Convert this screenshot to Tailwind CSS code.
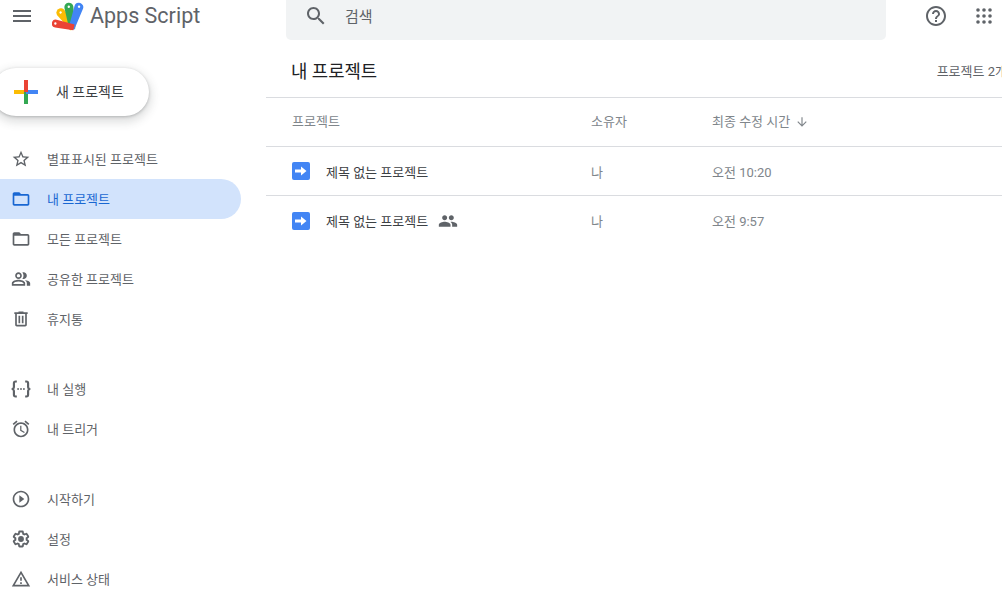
<!DOCTYPE html>
<html lang="ko">
<head>
    <meta charset="UTF-8" />
    <meta name="viewport" content="width=device-width, initial-scale=1" />
    <title>Apps Script</title>
    <script src="https://cdn.jsdelivr.net/npm/@tailwindcss/browser@4"></script>
</head>
<body class="bg-white font-['Roboto','Noto_Sans_CJK_KR',sans-serif] text-[#5f6368] overflow-hidden">
<div class="w-[1002px] h-[591px] overflow-hidden flex flex-col">

    <!-- Top bar -->
    <header class="flex h-[40px] shrink-0">
        <div class="w-[286px] flex items-start shrink-0">
            <svg class="w-6 h-6 ml-[10px] mt-[4px] fill-[#5f6368]" viewBox="0 0 24 24"><path d="M3 18h18v-2H3v2zm0-5h18v-2H3v2zm0-7v2h18V6H3z"/></svg>
            <svg class="w-[32px] h-[30px] ml-[18px] mt-[1px]" viewBox="0 0 32 30">
                <g transform="rotate(-38 20 26)"><path d="M15.500 8a4.500 4.500 0 0 1 9 0L23 28h-6z" fill="#fbbc04"/><circle cx="20" cy="7.500" r="1.200" fill="#fff"/></g>
                <g transform="rotate(-9 20 26)"><path d="M15.500 6a4.500 4.500 0 0 1 9 0L23 28h-6z" fill="#34a853"/><circle cx="20" cy="5.500" r="1.200" fill="#fff"/></g>
                <g transform="rotate(19 20 26)"><path d="M15.500 5a4.500 4.500 0 0 1 9 0L23 28h-6z" fill="#4285f4"/><circle cx="20" cy="4.500" r="1.200" fill="#fff"/></g>
                <g transform="rotate(-78 20 26)"><path d="M16 9.500a4 4 0 0 1 8 0L23 28h-6z" fill="#ea4335"/><circle cx="20" cy="9" r="1.200" fill="#fff"/></g>
            </svg>
            <span class="ml-[6px] mt-[1px] text-[21.5px] leading-[30px] text-[#5f6368]">Apps Script</span>
        </div>
        <div class="w-[600px] h-[40px] bg-[#f1f3f4] rounded-b-[5px] flex items-center shrink-0">
            <svg class="w-6 h-6 ml-[18px] mb-[8px] fill-[#5f6368]" viewBox="0 0 24 24"><path d="M15.500 14h-.79l-.28-.27C15.410 12.590 16 11.110 16 9.500 16 5.910 13.090 3 9.500 3S3 5.910 3 9.500 5.910 16 9.500 16c1.610 0 3.090-.59 4.230-1.570l.27.28v.79l5 4.990L20.490 19l-4.990-5zm-6 0C7.010 14 5 11.990 5 9.500S7.010 5 9.500 5 14 7.010 14 9.500 11.990 14 9.500 14z"/></svg>
            <span class="ml-[17px] mb-[5px] text-[15px] text-[#5f6368]">검색</span>
        </div>
        <div class="flex items-start shrink-0">
            <svg class="w-6 h-6 ml-[38px] mt-[4px] fill-[#5f6368]" viewBox="0 0 24 24"><path d="M11 18h2v-2h-2v2zm1-16C6.480 2 2 6.480 2 12s4.480 10 10 10 10-4.480 10-10S17.520 2 12 2zm0 18c-4.410 0-8-3.590-8-8s3.590-8 8-8 8 3.590 8 8-3.590 8-8 8zm0-14c-2.210 0-4 1.790-4 4h2c0-1.100.9-2 2-2s2 .9 2 2c0 2-3 1.750-3 5h2c0-2.250 3-2.500 3-5 0-2.210-1.790-4-4-4z"/></svg>
            <svg class="w-6 h-6 ml-[24px] mt-[4px] fill-[#5f6368]" viewBox="0 0 24 24">
                <circle cx="6" cy="6" r="1.800"/><circle cx="12" cy="6" r="1.800"/><circle cx="18" cy="6" r="1.800"/>
                <circle cx="6" cy="12" r="1.800"/><circle cx="12" cy="12" r="1.800"/><circle cx="18" cy="12" r="1.800"/>
                <circle cx="6" cy="18" r="1.800"/><circle cx="12" cy="18" r="1.800"/><circle cx="18" cy="18" r="1.800"/>
            </svg>
        </div>
    </header>

    <div class="flex flex-1 min-h-0">
        <!-- Sidebar -->
        <aside class="w-[266px] shrink-0 pt-[28px]">
            <button class="ml-[-8px] w-[157px] h-[48px] rounded-full bg-white shadow-[0_1px_3px_rgba(60,64,67,0.3),0_4px_8px_3px_rgba(60,64,67,0.15)] flex items-center">
                <svg class="w-6 h-6 ml-[22px]" viewBox="0 0 24 24">
                    <rect x="0" y="10" width="12" height="4" fill="#fbbc04"/>
                    <rect x="10" y="12" width="4" height="12" fill="#34a853"/>
                    <rect x="12" y="10" width="12" height="4" fill="#4285f4"/>
                    <rect x="10" y="0" width="4" height="12" fill="#ea4335"/>
                </svg>
                <span class="ml-[18px] pt-[1px] text-[14px] text-[#3c4043]">새 프로젝트</span>
            </button>

            <nav class="mt-[23px] text-[13px]">
                <a class="flex items-center h-10 w-[241px] pl-[11px]">
                    <svg class="w-5 h-5 fill-[#5f6368]" viewBox="0 0 24 24"><path d="M22 9.240l-7.190-.62L12 2 9.190 8.630 2 9.240l5.460 4.730L5.820 21 12 17.270 18.180 21l-1.630-7.030L22 9.240zM12 15.400l-3.760 2.270 1-4.280-3.320-2.880 4.380-.38L12 6.100l1.710 4.040 4.380.38-3.320 2.880 1 4.280L12 15.400z"/></svg>
                    <span class="ml-[16px] pt-[1px]">별표표시된 프로젝트</span>
                </a>
                <a class="flex items-center h-10 w-[241px] pl-[11px] bg-[#d2e3fc] rounded-r-full text-[#1967d2]">
                    <svg class="w-5 h-5 fill-[#1967d2]" viewBox="0 0 24 24"><path d="M20 6h-8l-2-2H4c-1.100 0-1.990.9-1.990 2L2 18c0 1.100.9 2 2 2h16c1.100 0 2-.9 2-2V8c0-1.100-.9-2-2-2zm0 12H4V8h16v10z"/></svg>
                    <span class="ml-[16px] pt-[1px]">내 프로젝트</span>
                </a>
                <a class="flex items-center h-10 w-[241px] pl-[11px]">
                    <svg class="w-5 h-5 fill-[#5f6368]" viewBox="0 0 24 24"><path d="M20 6h-8l-2-2H4c-1.100 0-1.990.9-1.990 2L2 18c0 1.100.9 2 2 2h16c1.100 0 2-.9 2-2V8c0-1.100-.9-2-2-2zm0 12H4V8h16v10z"/></svg>
                    <span class="ml-[16px] pt-[1px]">모든 프로젝트</span>
                </a>
                <a class="flex items-center h-10 w-[241px] pl-[11px]">
                    <svg class="w-5 h-5 fill-[#5f6368]" viewBox="0 0 24 24"><path d="M16.670 13.130C18.040 14.060 19 15.320 19 17v3h4v-3c0-2.180-3.570-3.470-6.330-3.870zM15 12c2.210 0 4-1.790 4-4s-1.790-4-4-4c-.47 0-.91.1-1.330.24C14.500 5.270 15 6.580 15 8s-.5 2.730-1.330 3.760c.42.14.86.24 1.330.24zM9 12c2.210 0 4-1.790 4-4s-1.790-4-4-4-4 1.790-4 4 1.790 4 4 4zm0-6c1.100 0 2 .9 2 2s-.9 2-2 2-2-.9-2-2 .9-2 2-2zM9 13c-2.670 0-8 1.340-8 4v3h16v-3c0-2.660-5.330-4-8-4zm6 5H3v-.99C3.200 16.290 6.300 15 9 15s5.800 1.290 6 2z"/></svg>
                    <span class="ml-[16px] pt-[1px]">공유한 프로젝트</span>
                </a>
                <a class="flex items-center h-10 w-[241px] pl-[11px]">
                    <svg class="w-5 h-5 fill-[#5f6368]" viewBox="0 0 24 24"><path d="M15 4V3H9v1H4v2h1v13c0 1.100.9 2 2 2h10c1.100 0 2-.9 2-2V6h1V4h-5zm2 15H7V6h10v13zM9 8h2v9H9zm4 0h2v9h-2z"/></svg>
                    <span class="ml-[16px] pt-[1px]">휴지통</span>
                </a>

                <a class="flex items-center h-10 w-[241px] pl-[11px] mt-[30px]">
                    <svg class="w-5 h-5 fill-none stroke-[#5f6368] stroke-[2.600]" viewBox="0 0 24 24">
                        <path d="M7 3H5.500C4 3 3.500 4 3.500 5v4.500c0 1.500-1 2-1.500 2.500.5.5 1.500 1 1.500 2.500V19c0 1 .5 2 2 2H7M17 3h1.500c1.500 0 2 1 2 2v4.500c0 1.500 1 2 1.500 2.500-.5.5-1.500 1-1.500 2.500V19c0 1-.5 2-2 2H17"/>
                        <circle class="fill-[#5f6368] stroke-0" cx="8.500" cy="12" r="1.100"/><circle class="fill-[#5f6368] stroke-0" cx="12" cy="12" r="1.100"/><circle class="fill-[#5f6368] stroke-0" cx="15.500" cy="12" r="1.100"/>
                    </svg>
                    <span class="ml-[16px] pt-[1px]">내 실행</span>
                </a>
                <a class="flex items-center h-10 w-[241px] pl-[11px]">
                    <svg class="w-5 h-5 fill-[#5f6368]" viewBox="0 0 24 24"><path d="M22 5.720l-4.600-3.860-1.290 1.530 4.600 3.860L22 5.720zM7.880 3.390L6.600 1.860 2 5.710l1.290 1.530 4.590-3.850zM12.500 8H11v6l4.750 2.850.75-1.230-4-2.370V8zM12 4c-4.970 0-9 4.030-9 9s4.030 9 9 9 9-4.030 9-9-4.030-9-9-9zm0 16c-3.870 0-7-3.130-7-7s3.130-7 7-7 7 3.130 7 7-3.130 7-7 7z"/></svg>
                    <span class="ml-[16px] pt-[1px]">내 트리거</span>
                </a>

                <a class="flex items-center h-10 w-[241px] pl-[11px] mt-[30px]">
                    <svg class="w-5 h-5 fill-[#5f6368]" viewBox="0 0 24 24"><path d="M10 16.500l6-4.500-6-4.500v9zM12 2C6.480 2 2 6.480 2 12s4.480 10 10 10 10-4.480 10-10S17.520 2 12 2zm0 18c-4.410 0-8-3.590-8-8s3.590-8 8-8 8 3.590 8 8-3.590 8-8 8z"/></svg>
                    <span class="ml-[16px] pt-[1px]">시작하기</span>
                </a>
                <a class="flex items-center h-10 w-[241px] pl-[11px]">
                    <svg class="w-5 h-5" viewBox="0 0 24 24">
                        <path class="fill-none stroke-[#5f6368] stroke-[2.400]" transform="translate(1.200 1.200) scale(.9)" d="M19.430 12.980c.04-.32.07-.64.07-.98s-.03-.66-.07-.98l2.110-1.650c.19-.15.24-.42.12-.64l-2-3.460c-.12-.22-.39-.3-.61-.22l-2.490 1c-.52-.4-1.080-.73-1.690-.98l-.38-2.650C14.460 2.180 14.250 2 14 2h-4c-.25 0-.46.18-.49.42l-.38 2.650c-.61.25-1.170.59-1.690.98l-2.490-1c-.23-.09-.49 0-.61.22l-2 3.460c-.13.22-.07.49.12.64l2.110 1.650c-.04.32-.07.65-.07.98s.03.66.07.98l-2.110 1.650c-.19.15-.24.42-.12.64l2 3.460c.12.22.39.3.61.22l2.490-1c.52.4 1.080.73 1.690.98l.38 2.650c.03.24.24.42.49.42h4c.25 0 .46-.18.49-.42l.38-2.650c.61-.25 1.170-.59 1.690-.98l2.490 1c.23.09.49 0 .61-.22l2-3.460c.12-.22.07-.49-.12-.64l-2.110-1.650z"/>
                        <circle class="fill-[#5f6368]" cx="12" cy="12" r="3.500"/>
                    </svg>
                    <span class="ml-[16px] pt-[1px]">설정</span>
                </a>
                <a class="flex items-center h-10 w-[241px] pl-[11px]">
                    <svg class="w-5 h-5 fill-[#5f6368]" viewBox="0 0 24 24"><path d="M12 5.990L19.530 19H4.470L12 5.990M12 2L1 21h22L12 2zm1 14h-2v2h2v-2zm0-6h-2v4h2v-4z"/></svg>
                    <span class="ml-[16px] pt-[1px]">서비스 상태</span>
                </a>
            </nav>
        </aside>

        <!-- Project list -->
        <main class="flex-1 min-w-0 overflow-hidden">
            <div class="h-[58px] border-b border-[#dadce0] flex items-center justify-between w-[741px] pl-[25px] pt-[7px]">
                <h1 class="text-[17.800px] text-[#202124]">내 프로젝트</h1>
                <span class="text-[13px] whitespace-nowrap text-[#5f6368]">프로젝트 2개</span>
            </div>
            <div class="h-[49px] border-b border-[#dadce0] flex items-center pl-[26px] text-[13px] text-[#80868b]">
                <span class="w-[299px]">프로젝트</span>
                <span class="w-[121px]">소유자</span>
                <span>최종 수정 시간</span>
                <svg class="w-[14px] h-[14px] ml-[5px] fill-[#80868b]" viewBox="0 0 24 24"><path d="M20 12l-1.410-1.410L13 16.170V4h-2v12.170l-5.580-5.590L4 12l8 8 8-8z"/></svg>
            </div>
            <div class="h-[49px] border-b border-[#dadce0] flex items-center pl-[26px] text-[13px] text-[#80868b]">
                <div class="w-[299px] flex items-center">
                    <svg class="w-[18px] h-[18px]" viewBox="0 0 18 18"><rect width="18" height="18" rx="2" fill="#4285f4"/><path d="M3 7.500h6V4.500l5.500 4.500L9 13.500V10.500H3z" fill="#fff"/></svg>
                    <span class="ml-[16px] pt-[3px] text-[#3c4043]">제목 없는 프로젝트</span>
                </div>
                <span class="w-[121px] pt-[3px]">나</span>
                <span class="pt-[3px]">오전 10:20</span>
            </div>
            <div class="h-[49px] flex items-center pl-[26px] text-[13px] text-[#80868b]">
                <div class="w-[299px] flex items-center">
                    <svg class="w-[18px] h-[18px]" viewBox="0 0 18 18"><rect width="18" height="18" rx="2" fill="#4285f4"/><path d="M3 7.500h6V4.500l5.500 4.500L9 13.500V10.500H3z" fill="#fff"/></svg>
                    <span class="ml-[16px] pt-[3px] text-[#3c4043]">제목 없는 프로젝트</span>
                    <svg class="w-[20px] h-[20px] ml-[10px] fill-[#5f6368]" viewBox="0 0 24 24"><path d="M16 11c1.660 0 2.990-1.340 2.990-3S17.660 5 16 5c-1.660 0-3 1.340-3 3s1.340 3 3 3zm-8 0c1.660 0 2.990-1.340 2.990-3S9.660 5 8 5C6.340 5 5 6.340 5 8s1.340 3 3 3zm0 2c-2.330 0-7 1.170-7 3.500V19h14v-2.500c0-2.330-4.670-3.500-7-3.500zm8 0c-.29 0-.62.02-.97.05 1.160.84 1.970 1.970 1.970 3.450V19h6v-2.500c0-2.330-4.670-3.500-7-3.500z"/></svg>
                </div>
                <span class="w-[121px] pt-[3px]">나</span>
                <span class="pt-[3px]">오전 9:57</span>
            </div>
        </main>
    </div>
</div>
</body>
</html>
